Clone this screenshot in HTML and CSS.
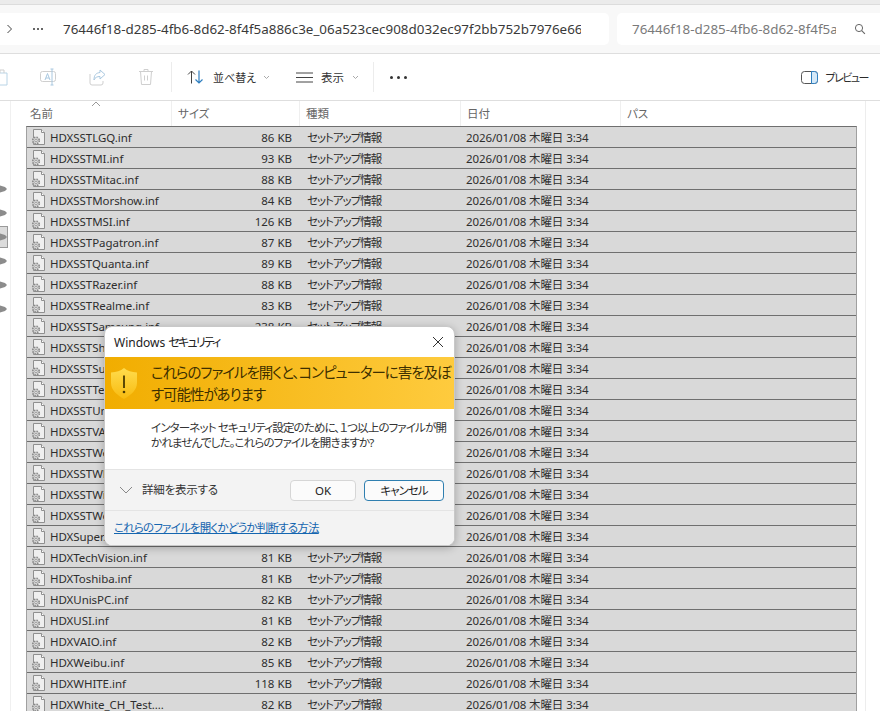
FILE: index.html
```html
<!DOCTYPE html>
<html lang="ja">
<head>
<meta charset="utf-8">
<title>Explorer</title>
<link rel="stylesheet" href="styles.css">
</head>
<body>
<div class="window">
  <div class="topstrip"></div>
  <div class="addressbar">
    <div class="address">
      <svg class="chev" width="8" height="12" viewBox="0 0 8 12"><path d="M1.500 2l4 4-4 4" fill="none" stroke="#444" stroke-width="1"/></svg>
      <div class="dots"><i></i><i></i><i></i></div>
      <span class="addr-text">76446f18-d285-4fb6-8d62-8f4f5a886c3e_06a523cec908d032ec97f2bb752b7976e66f</span>
    </div>
    <div class="search"><span class="search-text">76446f18-d285-4fb6-8d62-8f4f5a886c3e</span>
      <svg width="12" height="12" viewBox="0 0 12 12"><circle cx="5" cy="5" r="3.600" fill="none" stroke="#666" stroke-width="1"/><path d="M7.700 7.700l3.200 3.200" stroke="#666" stroke-width="1.100"/></svg>
    </div>
  </div>
  <div class="toolbar">
    <div class="tool-group">
      <svg class="ticon copy" width="9" height="18" viewBox="0 0 9 18"><path d="M-4 5h11v12h-11" fill="none" stroke="#b9d4e6"/><path d="M0 5V2h4v3" fill="none" stroke="#cfcfcf"/></svg>
      <svg class="ticon rename" width="17" height="18" viewBox="0 0 17 18"><rect x="0.500" y="3.500" width="15" height="10" rx="2" fill="none" stroke="#cfcfcf"/><path d="M5 12l2.500-6.500L10 12M6 10h3" fill="none" stroke="#a9c8e0"/><path d="M12 1v16M10.500 1h3M10.500 17h3" fill="none" stroke="#a9c8e0"/></svg>
      <svg class="ticon share" width="17" height="18" viewBox="0 0 17 18"><path d="M1 6v9a2 2 0 0 0 2 2h9a2 2 0 0 0 2-2v-2" fill="none" stroke="#cfcfcf"/><path d="M11 2l5 4.500-5 4.500V8.500c-3 0-5 1-6 3.500 0-5 2-7 6-7.500z" fill="none" stroke="#a9c8e0"/></svg>
      <svg class="ticon trash" width="16" height="18" viewBox="0 0 16 18"><path d="M1 3.500h14M6 3.500V1.500h4v2M2.500 3.500l1 13h9l1-13M6.500 7.500v5M9.500 7.500v5" fill="none" stroke="#cfcfcf"/></svg>
    </div>
    <div class="tool-sep"></div>
    <div class="tool-btn sort">
      <svg width="17" height="16" viewBox="0 0 17 16"><path d="M4.500 14.500V2M1 5.500L4.500 2 8 5.500" fill="none" stroke="#444"/><path d="M12 1.500V14M8.500 10.500L12 14l3.500-3.500" fill="none" stroke="#2f7fc0" stroke-width="1.200"/></svg>
      <span>並べ替え</span><svg class="caret" width="7" height="5" viewBox="0 0 7 5"><path d="M1 1l2.500 2.500L6 1" fill="none" stroke="#aaa"/></svg>
    </div>
    <div class="tool-btn view">
      <svg width="17" height="11" viewBox="0 0 17 11"><path d="M0 1h17M0 5.500h17M0 10h17" stroke="#444"/></svg>
      <span>表示</span><svg class="caret" width="7" height="5" viewBox="0 0 7 5"><path d="M1 1l2.500 2.500L6 1" fill="none" stroke="#aaa"/></svg>
    </div>
    <div class="tool-sep"></div>
    <div class="more"><i></i><i></i><i></i></div>
    <div class="preview">
      <svg width="17" height="13" viewBox="0 0 17 13"><rect x="0.500" y="0.500" width="16" height="12" rx="3" fill="none" stroke="#555"/><path d="M10.500 0.500h3a3 3 0 0 1 3 3v6a3 3 0 0 1-3 3h-3z" fill="#d5e9f8" stroke="#2f7fc0"/></svg>
      <span>プレビュー</span>
    </div>
  </div>
  <div class="content">
    <aside class="pins">
      <div class="pinslot"><svg width="7" height="10" viewBox="0 0 7 10"><path d="M0 1.500l5 1.500 2 2-2 2-5 1.500z" fill="#8c8c8c"/></svg></div>
      <div class="pinslot"><svg width="7" height="10" viewBox="0 0 7 10"><path d="M0 1.500l5 1.500 2 2-2 2-5 1.500z" fill="#8c8c8c"/></svg></div>
      <div class="pinslot on"><svg width="7" height="10" viewBox="0 0 7 10"><path d="M0 1.500l5 1.500 2 2-2 2-5 1.500z" fill="#8c8c8c"/></svg></div>
      <div class="pinslot"><svg width="7" height="10" viewBox="0 0 7 10"><path d="M0 1.500l5 1.500 2 2-2 2-5 1.500z" fill="#8c8c8c"/></svg></div>
      <div class="pinslot"><svg width="7" height="10" viewBox="0 0 7 10"><path d="M0 1.500l5 1.500 2 2-2 2-5 1.500z" fill="#8c8c8c"/></svg></div>
      <div class="pinslot"><svg width="7" height="10" viewBox="0 0 7 10"><path d="M0 1.500l5 1.500 2 2-2 2-5 1.500z" fill="#8c8c8c"/></svg></div>
    </aside>
    <div class="list">
      <div class="head">
        <div class="col c-name">名前<svg class="sortmark" width="10" height="6" viewBox="0 0 10 6"><path d="M1 5l4-4 4 4" fill="none" stroke="#999"/></svg></div>
        <div class="col c-size">サイズ</div>
        <div class="col c-type">種類</div>
        <div class="col c-date">日付</div>
        <div class="col c-path">パス</div>
      </div>
      <div class="rows" id="rows"></div>
    </div>
    <div class="scrolltrack"></div>
  </div>
  <div class="dialog">
    <div class="dlg-title"><span>Windows <span class="tight">セキュリティ</span></span>
      <svg width="12" height="12" viewBox="0 0 12 12"><path d="M1 1l10 10M11 1L1 11" stroke="#333" stroke-width="1"/></svg>
    </div>
    <div class="dlg-banner">
      <svg class="shield" width="26" height="31" viewBox="0 0 26 31"><defs><linearGradient id="sg" x1="0" y1="0" x2="0" y2="1"><stop offset="0" stop-color="#ffdc4d"/><stop offset="1" stop-color="#f8bb10"/></linearGradient></defs><path d="M13 0c3.500 3 7.500 4 13 4.500V15c0 7-6 12-13 16C6 27 0 22 0 15V4.500C5.500 4 9.500 3 13 0z" fill="url(#sg)"/><path d="M13 7.500V20" stroke="#4a3a00" stroke-width="1.800"/><circle cx="13" cy="24" r="1.300" fill="#4a3a00"/></svg>
      <p>これらのファイルを開くと、コンピューターに害を及ぼす可能性があります</p>
    </div>
    <div class="dlg-body"><p>インターネット セキュリティ設定のために、１つ以上のファイルが開かれませんでした。これらのファイルを開きますか?</p></div>
    <div class="dlg-actions">
      <svg class="expand" width="14" height="8" viewBox="0 0 14 8"><path d="M1 1l6 6 6-6" fill="none" stroke="#888"/></svg>
      <span class="details">詳細を表示する</span>
      <button class="btn">OK</button>
      <button class="btn primary">キャンセル</button>
    </div>
    <div class="dlg-foot"><a>これらのファイルを開くかどうか判断する方法</a></div>
  </div>
</div>
<script src="app.js"></script>
</body>
</html>
```
FILE: styles.css
```css
* { box-sizing: border-box; }
html, body { margin: 0; padding: 0; height: 100%; overflow: hidden; background: #fff; }
body { font-family: "Noto Sans", "Noto Sans CJK JP", sans-serif; font-size: 11.500px; color: #2a2a2a; font-feature-settings: "palt"; }
.window { position: relative; width: 880px; height: 711px; overflow: hidden; display: flex; flex-direction: column; }
.topstrip { height: 5px; background: #ebebeb; border-bottom: 1px solid #dcdcdc; flex: none; }
.addressbar { height: 49px; flex: none; background: #f8f8f8; border-bottom: 1px solid #dedede; display: flex; align-items: center; }
.address { width: 609px; height: 32px; background: #fff; border-radius: 0 5px 5px 0; display: flex; align-items: center; padding-left: 6px; overflow: hidden; flex: none; }
.chev { flex: none; }
.dots { display: flex; gap: 2px; margin-left: 19px; width: 30px; flex: none; }
.dots i { width: 2px; height: 2px; background: #333; border-radius: 50%; display: block; }
.addr-text { font-size: 13.400px; white-space: nowrap; width: 518px; overflow: hidden; color: #3a3a3a; flex: none; }
.search { margin-left: 8px; flex: 1; height: 32px; background: #fff; border-radius: 5px 0 0 5px; display: flex; align-items: center; padding: 0 0 0 15px; color: #7a7a7a; gap: 18px; }
.search-text { width: 204px; font-size: 13.400px; white-space: nowrap; overflow: hidden; flex: none; }
.toolbar { height: 47px; flex: none; background: #fff; border-bottom: 1px solid #dedede; display: flex; align-items: center; }
.tool-group { display: flex; width: 171px; align-items: center; flex: none; }
.ticon { flex: none; }
.rename { margin-left: 31px; }
.share { margin-left: 32px; }
.trash { margin-left: 32px; }
.tool-sep { width: 1px; height: 30px; background: #ececec; flex: none; }
.tool-btn { display: flex; align-items: center; color: #333; flex: none; white-space: nowrap; }
.sort { margin-left: 15px; width: 94px; font-size: 11px; }
.sort span { margin-left: 9px; width: 42px; }
.view { margin-left: 15px; width: 77px; }
.view span { margin-left: 8px; width: 23px; }
.caret { margin-left: 8px; }
.more { margin-left: 16px; display: flex; gap: 4px; }
.more i { width: 3px; height: 3px; border-radius: 50%; background: #333; display: block; }
.preview { margin-left: auto; display: flex; align-items: center; gap: 7px; padding-right: 12px; font-size: 11px; letter-spacing: -1.500px; }
.content { flex: 1; display: flex; min-height: 0; }
.pins { width: 11px; border-right: 1px solid #f0f0f0; flex: none; padding-top: 76px; display: flex; flex-direction: column; }
.pinslot { height: 24px; width: 8px; display: flex; align-items: center; flex: none; }
.pinslot.on { height: 22px; margin: 1px 0; background: #dcdcdc; border: 1px solid #9a9a9a; border-left: 0; }
.list { width: 848px; padding-left: 15px; flex: none; }
.head { display: flex; height: 25px; background: #fff; }
.col { position: relative; padding-left: 4px; line-height: 26px; color: #666; border-right: 1px solid #efefef; flex: none; }
.c-name { width: 146px; }
.c-size { width: 128px; padding-left: 6px; }
.c-type { width: 161px; padding-left: 6px; }
.c-date { width: 160px; padding-left: 6px; }
.c-path { width: 238px; padding-left: 6px; border-right: 0; }
.sortmark { position: absolute; left: 65px; top: 0; }
.rows { width: 831px; border-top: 1px solid #6f6f6f; border-left: 1px solid #a0a0a0; border-right: 1px solid #a0a0a0; }
.row { height: 21px; display: flex; align-items: center; background: #d9d9d9; border-bottom: 1px solid #6f6f6f; white-space: nowrap; color: #2e2e2e; }
.r-icon { flex: none; margin-left: 3px; }
.r-name { width: 120px; margin-left: 3px; overflow: hidden; flex: none; letter-spacing: -0.050px; }
.r-size { width: 122px; text-align: right; flex: none; }
.r-type { width: 159px; margin-left: 15px; flex: none; letter-spacing: -1px; }
.r-date { width: 160px; flex: none; letter-spacing: -0.100px; }
.scrolltrack { width: 1px; margin-left: 6px; height: 100%; background: #ededed; flex: none; }
.dialog { position: absolute; left: 104px; top: 326px; width: 351px; height: 220px; background: #fff; border: 1px solid #c8c8c8; border-radius: 8px; overflow: hidden; box-shadow: 0 2px 8px rgba(0,0,0,.25); display: flex; flex-direction: column; }
.dlg-title { height: 30px; display: flex; align-items: center; justify-content: space-between; padding: 0 10px 0 9px; flex: none; color: #222; font-size: 12px; }
.tight { letter-spacing: -1.800px; }
.dlg-banner { height: 52px; background: linear-gradient(90deg, #f1ad00, #fecb3e); display: flex; align-items: center; flex: none; padding-left: 6px; }
.shield { flex: none; }
.dlg-banner p { margin: 0 0 0 14px; font-size: 14.500px; line-height: 22px; color: #3d2f00; width: 301px; letter-spacing: -1.050px; }
.dlg-body { height: 60px; flex: none; padding: 11px 6px 0 46px; }
.dlg-body p { margin: 0; line-height: 15px; color: #333; font-size: 11.500px; letter-spacing: -0.850px; }
.dlg-actions { height: 42px; flex: none; background: #f3f3f3; border-top: 1px solid #e4e4e4; border-bottom: 1px solid #e4e4e4; display: flex; align-items: center; padding: 0 10px 0 14px; }
.details { margin-left: 9px; flex: 1; color: #333; padding-bottom: 3px; letter-spacing: -0.200px; }
.btn { font: inherit; height: 21px; width: 66px; background: #fbfbfb; border: 1px solid #d6d6d6; border-radius: 4px; color: #222; padding: 0; }
.btn.primary { width: 80px; margin-left: 8px; border: 1px solid #2f7fb0; letter-spacing: -1px; }
.dlg-foot { flex: 1; background: #f3f3f3; padding: 9px 9px; line-height: 16px; }
.dlg-foot a { color: #1566b0; text-decoration: underline; font-size: 11.500px; letter-spacing: -0.800px; }
```
FILE: app.js
```js
var files = [
  ["HDXSSTLGQ.inf", "86 KB"], ["HDXSSTMI.inf", "93 KB"], ["HDXSSTMitac.inf", "88 KB"],
  ["HDXSSTMorshow.inf", "84 KB"], ["HDXSSTMSI.inf", "126 KB"], ["HDXSSTPagatron.inf", "87 KB"],
  ["HDXSSTQuanta.inf", "89 KB"], ["HDXSSTRazer.inf", "88 KB"], ["HDXSSTRealme.inf", "83 KB"],
  ["HDXSSTSamsung.inf", "238 KB"], ["HDXSSTSharp.inf", "84 KB"], ["HDXSSTSurface.inf", "86 KB"],
  ["HDXSSTTecno.inf", "84 KB"], ["HDXSSTUnis.inf", "84 KB"], ["HDXSSTVAIO.inf", "84 KB"],
  ["HDXSSTWeibu.inf", "84 KB"], ["HDXSSTWHITE.inf", "84 KB"], ["HDXSSTWistron.inf", "84 KB"],
  ["HDXSSTWortmann.inf", "84 KB"], ["HDXSuper.inf", "81 KB"], ["HDXTechVision.inf", "81 KB"],
  ["HDXToshiba.inf", "81 KB"], ["HDXUnisPC.inf", "82 KB"], ["HDXUSI.inf", "81 KB"],
  ["HDXVAIO.inf", "82 KB"], ["HDXWeibu.inf", "85 KB"], ["HDXWHITE.inf", "118 KB"],
  ["HDXWhite_CH_Test....", "82 KB"]
];
var icon = '<svg class="r-icon" width="17" height="18" viewBox="0 0 17 18"><path d="M3.500 1.500h8l3 3v12h-11z" fill="#efefef" stroke="#8f8f8f"/><path d="M11.500 1.500v3h3" fill="#fff" stroke="#8f8f8f"/><circle cx="6" cy="12.500" r="3.300" fill="#d4d4d4" stroke="#8a8a8a" stroke-width="1.600" stroke-dasharray="1.500 1.100"/><circle cx="6" cy="12.500" r="1.200" fill="#eee" stroke="#8a8a8a" stroke-width=".7"/></svg>';
document.getElementById("rows").innerHTML = files.map(function (f) {
  return '<div class="row">' + icon + '<span class="r-name">' + f[0] + '</span><span class="r-size">' + f[1] +
    '</span><span class="r-type">セットアップ情報</span><span class="r-date">2026/01/08 木曜日 3:34</span></div>';
}).join("");
```
